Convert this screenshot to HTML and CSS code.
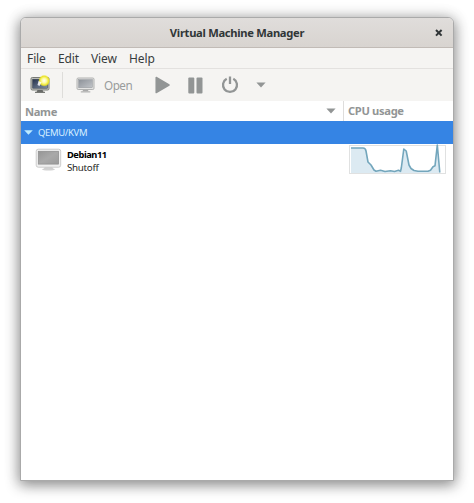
FILE: index.html
```html
<!DOCTYPE html>
<html lang="en">
<head>
<meta charset="utf-8">
<title>Virtual Machine Manager</title>
<link rel="stylesheet" href="styles.css">
</head>
<body>
<main class="window">
  <header class="titlebar">
    <h1>Virtual Machine Manager</h1>
    <svg class="close" width="8" height="8" viewBox="0 0 8 8"><path d="M1 1l5.6 5.6M6.6 1L1 6.6"/></svg>
  </header>
  <nav class="menubar"><span class="file">File</span><span class="edit">Edit</span><span class="view">View</span><span class="help">Help</span></nav>
  <div class="toolbar">
    <svg class="new" width="22" height="20" viewBox="0 0 22 20">
      <defs>
        <linearGradient id="screen" x2="1" y2="1"><stop stop-color="#25324a"/><stop offset="1" stop-color="#8291a6"/></linearGradient>
        <radialGradient id="glow"><stop offset="0" stop-color="#fff"/><stop offset=".4" stop-color="#fdfba0"/><stop offset=".75" stop-color="#ece52b"/><stop offset="1" stop-color="#ece52b" stop-opacity="0"/></radialGradient>
      </defs>
      <rect x="2" y="2.5" width="18" height="12.5" rx="1.3" fill="#c9cac5" stroke="#777a75"/>
      <rect x="3.7" y="4.2" width="14.6" height="9" fill="url(#screen)" stroke="#39424e" stroke-width=".6"/>
      <path d="M8.5 15h5l1 2h-7z" fill="#656765"/><path d="M6 17.4h10" stroke="#777975" stroke-width="1.3"/>
      <circle cx="15.2" cy="5.7" r="6" fill="url(#glow)"/>
      <path d="M9.5 6l3 1.2-2 3.8-2-1z" fill="#fff" opacity=".85"/>
    </svg>
    <i class="separator"></i>
    <svg class="monitor" width="19" height="17" viewBox="0 0 19 17">
      <defs><linearGradient id="gray" x2="1" y2="1"><stop stop-color="#8d9299"/><stop offset="1" stop-color="#c1c4c8"/></linearGradient></defs>
      <rect x="1" y="1" width="17" height="11.5" rx="1.2" fill="#e3e3e2" stroke="#b1b2b1"/>
      <rect x="2.7" y="2.7" width="13.6" height="8" fill="url(#gray)" stroke="#92969a" stroke-width=".5"/>
      <path d="M7 13h5l.7 1.6H6.3z" fill="#aaa"/><path d="M4.8 14.8h9.5" stroke="#b4b4b3" stroke-width="1.2"/>
    </svg>
    <span class="open">Open</span>
    <svg class="play" width="16" height="18" viewBox="0 0 16 18"><path d="M1.2 1.5L14 9 1.2 16.5z" fill="#929595" stroke="#929595" stroke-width="1.5" stroke-linejoin="round"/></svg>
    <svg class="pause" width="15" height="17" viewBox="0 0 15 17"><rect x=".3" y=".4" width="6" height="16" rx="1" fill="#929595"/><rect x="8.5" y=".4" width="6" height="16" rx="1" fill="#929595"/></svg>
    <svg class="power" width="18" height="18" viewBox="0 0 18 18"><path d="M5.7 2.8a7 7 0 1 0 6.6 0M9 .6V8" fill="none" stroke="#929595" stroke-width="2.3"/></svg>
    <svg class="more" width="10" height="6" viewBox="0 0 10 6"><path d="M.4.5h9.2L5 5.4z" fill="#929595"/></svg>
  </div>
  <div class="columns">
    <div class="name-head"><span>Name</span><svg width="10" height="6" viewBox="0 0 10 6"><path d="M.4.5h9.2L5 5.4z" fill="#929595"/></svg></div>
    <div class="cpu-head"><span>CPU usage</span></div>
  </div>
  <div class="connection"><svg width="9" height="5" viewBox="0 0 9 5"><path d="M.2.2h8.6L4.5 4.7z" fill="#bdebff"/></svg><span>QEMU/KVM</span></div>
  <div class="machine">
    <svg class="machine-icon" width="27" height="24" viewBox="0 0 27 24">
      <defs><linearGradient id="off" x2="1" y2="1"><stop stop-color="#969696"/><stop offset=".5" stop-color="#a9a9a9"/><stop offset="1" stop-color="#9b9b9b"/></linearGradient></defs>
      <path d="M10 18h7l1 3H9z" fill="#ccc"/><ellipse cx="13.5" cy="21.3" rx="6.5" ry="1.2" fill="#d2d2d2"/>
      <rect x="1.2" y="1.2" width="24.5" height="18" rx="2" fill="#efefef" stroke="#cdcdcd"/>
      <rect x="3.3" y="3.3" width="20.3" height="12.8" fill="url(#off)" stroke="#8c8c8c" stroke-width=".7"/>
    </svg>
    <div class="details"><strong>Debian11</strong><span>Shutoff</span></div>
    <svg class="graph" width="99" height="32" viewBox="0 0 99 32">
      <rect x="1.5" y="2.5" width="96" height="28" fill="#fff" stroke="#e0e1e1"/>
      <path class="area" d="M3 5H15Q17.5 5 18 8L20 19 23 22 26 27 28 28.2 32.5 27.3 37 28.5 42.5 27.7 46.5 28.5 50.5 27.3 52.5 28.3 53.3 25 55.8 6 58.2 8 61 22 63 25.5 66 27.5 70 28.3H80L82.5 27.3 85 23.8 87 22.8 89.3 2 91.8 30H3z"/>
      <path class="line" d="M3 5H15Q17.5 5 18 8L20 19 23 22 26 27 28 28.2 32.5 27.3 37 28.5 42.5 27.7 46.5 28.5 50.5 27.3 52.5 28.3 53.3 25 55.8 6 58.2 8 61 22 63 25.5 66 27.5 70 28.3H80L82.5 27.3 85 23.8 87 22.8 89.3 2 91.8 29.5"/>
    </svg>
  </div>
</main>
</body>
</html>
```
FILE: styles.css
```css
* { box-sizing: border-box; }
body {
  margin: 0;
  width: 474px;
  height: 503px;
  padding: 17px 20px 22px;
  overflow: hidden;
  background: #fff;
  color: #383c3d;
  font: 12px/1 "Noto Sans", sans-serif;
}
svg { display: block; flex: none; }
.window {
  width: 434px;
  height: 464px;
  background: #fff;
  border: 1px solid #aaa;
  border-radius: 6px 6px 0 0;
  overflow: hidden;
  box-shadow: 0 3px 14px 1px rgba(0,0,0,.45), 0 0 20px rgba(0,0,0,.06);
}
.titlebar {
  height: 30px;
  display: grid;
  grid-template-columns: 1fr auto 1fr;
  align-items: center;
  background: linear-gradient(#e0dddb, #d8d4d0);
  border-bottom: 1px solid #c1bbb6;
}
h1 { grid-column: 2; margin: 0; font-size: 11.2px; line-height: 16px; font-weight: 700; letter-spacing: -.3px; white-space: nowrap; color: #303637; }
.close { justify-self: end; margin-right: 10px; fill: none; stroke: #2f3436; stroke-width: 2; }
.menubar { height: 21px; display: flex; padding: 2px 6px 0; background: #f5f4f2; border-bottom: 1px solid #e3e1df; line-height: 17px; letter-spacing: -.1px; }
.file { width: 31px; } .edit { width: 33px; } .view { width: 38px; }
.toolbar { height: 32px; display: flex; align-items: center; background: #f5f4f2; padding-left: 8px; }
.separator { width: 1px; height: 26px; margin: 0 13px 0 11px; background: #deddda; }
.open { width: 28px; margin-left: 9px; line-height: 18px; font-size: 11.7px; letter-spacing: -.5px; color: #999c9c; }
.play { margin-left: 23px; }
.pause { margin-left: 17px; }
.power { margin-left: 18px; }
.more { margin-left: 17px; }
.columns { height: 20px; display: grid; grid-template-columns: 323px 1fr; color: #929595; font-weight: 700; font-size: 11.2px; line-height: 19px; letter-spacing: -.35px; }
.name-head { display: flex; justify-content: space-between; align-items: center; padding: 0 7px 0 4px; border-right: 1px solid #dedddc; }
.cpu-head { padding-left: 4px; }
.connection { height: 23px; display: flex; align-items: center; gap: 5px; padding-left: 3px; background: #3584e4; color: #d7efff; font-size: 9.5px; letter-spacing: -.35px; }
.machine { height: 32px; display: flex; }
.machine-icon { margin: 4px 0 0 14px; }
.details { display: flex; flex-direction: column; width: 100px; margin: 4px 0 0 5px; font-size: 9.8px; line-height: 13px; letter-spacing: -.3px; color: #292929; }
.details strong { color: #000; font-size: 9.3px; letter-spacing: -.45px; }
.graph { margin: -1px 6px 0 auto; }
.area { fill: #dceaf2; }
.line { fill: none; stroke: #73a6bc; stroke-width: 1.6; stroke-linejoin: round; }
```
